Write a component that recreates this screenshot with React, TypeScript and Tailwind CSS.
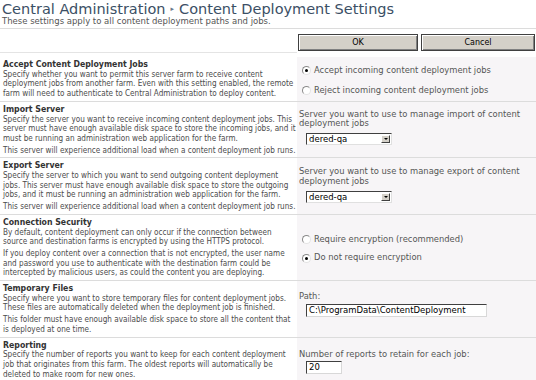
import React from 'react';

const leftFont = { fontFamily: '"DejaVu Sans Condensed", Tahoma, "Liberation Sans", sans-serif' };
const rightFont = { fontFamily: '"DejaVu Sans", Verdana, sans-serif' };

function Radio({ checked }: { checked?: boolean }) {
    return (
        <span className="relative inline-block w-[9px] h-[9px] rounded-full bg-white border border-t-[#8a8a8a] border-l-[#8a8a8a] border-b-[#e4e4e4] border-r-[#e4e4e4] shrink-0">
            {checked && <span className="absolute left-[2px] top-[2px] w-[3px] h-[3px] rounded-full bg-black" />}
        </span>
    );
}

function Select({ value }: { value: string }) {
    return (
        <div className="flex items-stretch w-[86px] h-[12px] bg-white border border-t-[#404040] border-l-[#404040] border-b-[#e0e0e0] border-r-[#e0e0e0]">
            <span className="flex-1 text-[8.5px] leading-[10px] pl-[2px] text-black" style={rightFont}>{value}</span>
            <span className="w-[9px] my-[1px] mr-[1px] bg-[#d4d0c8] border border-t-white border-l-white border-b-[#404040] border-r-[#404040] flex items-center justify-center">
                <span className="block w-0 h-0 border-l-[2px] border-r-[2px] border-t-[2px] border-l-transparent border-r-transparent border-t-black" />
            </span>
        </div>
    );
}

function TextBox({ value, width }: { value: string; width: string }) {
    return (
        <div className={`${width} h-[13px] bg-white border border-t-[#404040] border-l-[#404040] border-b-[#d8d8d8] border-r-[#d8d8d8] text-[8.5px] leading-[11px] pl-[2px] text-black`} style={rightFont}>
            {value}
        </div>
    );
}

function Section({ title, children, control, className }: { title: string; children: React.ReactNode; control: React.ReactNode; className?: string }) {
    return (
        <div className={`grid grid-cols-[297px_1fr] border-t border-[#dcdcdc] ${className ?? ''}`}>
            <div className="pl-[3px] pr-[1px] pt-[3px] pb-[2px] text-[8.1px] leading-[9.7px] text-[#4c4c4c]" style={leftFont}>
                <div className="font-bold text-[8.7px] text-[#333]">{title}</div>
                {children}
            </div>
            <div className="bg-[#f7f5f7] text-[8.4px] leading-[9.6px] text-[#555]" style={rightFont}>
                {control}
            </div>
        </div>
    );
}

export default function App() {
    return (
        <div className="w-[536px] h-[380px] bg-white overflow-hidden">
            <div className="px-[2px] pt-[1px]">
                <div className="text-[14.5px] leading-[16px] text-[#3b4f65] flex items-center" style={rightFont}>
                    <span>Central Administration</span>
                    <span className="mx-[5px] text-[7px] text-[#6b7b8c]">▸</span>
                    <span>Content Deployment Settings</span>
                </div>
                <div className="text-[8.5px] leading-[9px] text-[#555]" style={rightFont}>
                    These settings apply to all content deployment paths and jobs.
                </div>
            </div>
            <div className="mt-[2px] border-t border-[#dcdcdc] grid grid-cols-[297px_1fr]">
                <div className="h-[24px] border-b border-[#e4e4e4]" />
                <div className="flex gap-[3px] pt-[5px] pl-[1px]">
                    <div className="w-[120px] h-[17px] bg-[#d4d0c8] border border-[#404040] shadow-[inset_1px_1px_0_#ffffff,inset_-1px_-1px_0_#808080] flex items-center justify-center text-[8px] text-black" style={rightFont}>OK</div>
                    <div className="w-[114px] h-[17px] bg-[#d4d0c8] border border-[#404040] shadow-[inset_1px_1px_0_#ffffff,inset_-1px_-1px_0_#808080] flex items-center justify-center text-[8px] text-black" style={rightFont}>Cancel</div>
                </div>
            </div>

            <Section
                title="Accept Content Deployment Jobs"
                className="border-t-0 mt-[4px]"
                control={
                    <div className="pl-[5px] pt-[9px] flex flex-col gap-[10px]">
                        <div className="flex items-center gap-[3px]"><Radio checked /><span>Accept incoming content deployment jobs</span></div>
                        <div className="flex items-center gap-[3px]"><Radio /><span>Reject incoming content deployment jobs</span></div>
                    </div>
                }
            >
                <p>Specify whether you want to permit this server farm to receive content deployment jobs from another farm. Even with this setting enabled, the remote farm will need to authenticate to Central Administration to deploy content.</p>
            </Section>

            <Section
                title="Import Server"
                control={
                    <div className="pl-[2px] pt-[8px]">
                        <div>Server you want to use to manage import of content deployment jobs</div>
                        <div className="pl-[7px] pt-[4px]"><Select value="dered-qa" /></div>
                    </div>
                }
            >
                <p>Specify the server you want to receive incoming content deployment jobs. This server must have enough available disk space to store the incoming jobs, and it must be running an administration web application for the farm.</p>
                <p className="mt-[2px]">This server will experience additional load when a content deployment job runs.</p>
            </Section>

            <Section
                title="Export Server"
                control={
                    <div className="pl-[2px] pt-[9px]">
                        <div>Server you want to use to manage export of content deployment jobs</div>
                        <div className="pl-[7px] pt-[4px]"><Select value="dered-qa" /></div>
                    </div>
                }
            >
                <p>Specify the server to which you want to send outgoing content deployment jobs. This server must have enough available disk space to store the outgoing jobs, and it must be running an administration web application for the farm.</p>
                <p className="mt-[2px]">This server will experience additional load when a content deployment job runs.</p>
            </Section>

            <Section
                title="Connection Security"
                control={
                    <div className="pl-[5px] pt-[20px] flex flex-col gap-[9px]">
                        <div className="flex items-center gap-[3px]"><Radio /><span>Require encryption (recommended)</span></div>
                        <div className="flex items-center gap-[3px]"><Radio checked /><span>Do not require encryption</span></div>
                    </div>
                }
            >
                <p>By default, content deployment can only occur if the connection between source and destination farms is encrypted by using the HTTPS protocol.</p>
                <p className="mt-[2px]">If you deploy content over a connection that is not encrypted, the user name and password you use to authenticate with the destination farm could be intercepted by malicious users, as could the content you are deploying.</p>
            </Section>

            <Section
                title="Temporary Files"
                control={
                    <div className="pl-[2px] pt-[11px]">
                        <div>Path:</div>
                        <div className="pl-[7px] pt-[2px]"><TextBox value="C:\ProgramData\ContentDeployment" width="w-[181px]" /></div>
                    </div>
                }
            >
                <p>Specify where you want to store temporary files for content deployment jobs. These files are automatically deleted when the deployment job is finished.</p>
                <p className="mt-[2px]">This folder must have enough available disk space to store all the content that is deployed at one time.</p>
            </Section>

            <Section
                title="Reporting"
                className="min-h-[60px]"
                control={
                    <div className="pl-[2px] pt-[12px]">
                        <div>Number of reports to retain for each job:</div>
                        <div className="pl-[7px] pt-[2px]"><TextBox value="20" width="w-[36px]" /></div>
                    </div>
                }
            >
                <p>Specify the number of reports you want to keep for each content deployment job that originates from this farm. The oldest reports will automatically be deleted to make room for new ones.</p>
            </Section>
        </div>
    );
}
